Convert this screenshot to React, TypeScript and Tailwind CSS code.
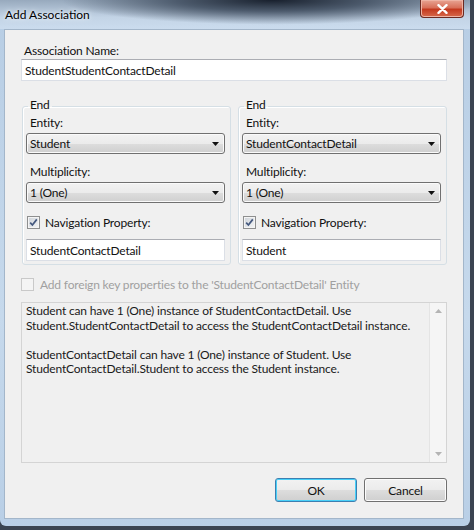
import React from "react";

const font = "font-['Lato','Liberation_Sans',sans-serif]";

function Caret() {
  return (
    <svg width="7" height="4" viewBox="0 0 7 4" className="shrink-0">
      <path d="M0 0H7L3.5 4Z" fill="#111" />
    </svg>
  );
}

function Combo({ value }: { value: string }) {
  return (
    <div className="flex h-[21px] items-center justify-between rounded-[3px] border border-[#707070] bg-[linear-gradient(to_bottom,#f2f2f2_0%,#ebebeb_50%,#dddddd_51%,#cfcfcf_100%)] pl-[3px] pr-[5px] shadow-[inset_0_0_0_1px_#fafafa]">
      <span className="text-[#111]">{value}</span>
      <Caret />
    </div>
  );
}

function TextBox({ value, className = "" }: { value: string; className?: string }) {
  return (
    <div
      className={`flex h-[22px] items-center border border-[#dbdfe6] border-t-[#abadb3] bg-white pl-[3px] text-[#111] ${className}`}
    >
      {value}
    </div>
  );
}

function Check({ checked, disabled }: { checked?: boolean; disabled?: boolean }) {
  return (
    <span
      className={`flex h-[13px] w-[13px] shrink-0 items-center justify-center border ${
        disabled
          ? "border-[#c9c9c9] bg-[#f4f4f4]"
          : "border-[#8e8f8f] bg-[linear-gradient(135deg,#cdd2d8,#f5f6f7)] shadow-[inset_0_0_0_1px_#f4f4f4]"
      }`}
    >
      {checked && (
        <svg width="9" height="9" viewBox="0 0 9 9">
          <path d="M1.2 4.6L3.4 7L7.8 1.4" fill="none" stroke="#44587e" strokeWidth="1.7" />
        </svg>
      )}
    </span>
  );
}

function EndGroup({ entity, nav }: { entity: string; nav: string }) {
  return (
    <fieldset className="rounded-[3px] border border-[#d5dfe5] pb-[3px] pl-[3px] pr-[5px] shadow-[inset_1px_1px_0_#fff]">
      <legend className="ml-[2px] px-[2px] pb-[3px] leading-[15px]">End</legend>
      <div className="pl-[4px]">Entity:</div>
      <div className="mt-[3px]">
        <Combo value={entity} />
      </div>
      <div className="mt-[10px] pl-[4px]">Multiplicity:</div>
      <div className="mt-[3px]">
        <Combo value="1 (One)" />
      </div>
      <div className="mt-[12px] flex items-center gap-[5px] pl-[1px]">
        <Check checked />
        <span>Navigation Property:</span>
      </div>
      <TextBox value={nav} className="mt-[9px]" />
    </fieldset>
  );
}

export default function App() {
  return (
    <div className={`h-[530px] w-[474px] overflow-hidden bg-[#3b4451] text-[12px] leading-[15px] tracking-[-0.17px] text-[#111] ${font}`}>
      <div className="flex h-[526px] w-[470px] flex-col rounded-b-[6px] bg-[linear-gradient(to_bottom,#b7cde4,#c6d9ec_60%,#b9cfe6)]">
        <div className="relative flex h-[29px] shrink-0 items-center bg-[radial-gradient(ellipse_45%_85%_at_58%_0%,#18202d_0%,#4c5a6c_45%,transparent_100%),linear-gradient(to_bottom,#97a9bd,#c3d4e6_60%,#cbdcee)] pl-[5px]">
          <span className="text-[12px] tracking-normal text-black [text-shadow:0_0_6px_#eaf2fb,0_0_3px_#eaf2fb]">Add Association</span>
          <div className="absolute right-[6px] top-0 flex h-[18px] w-[44px] items-center justify-center rounded-b-[4px] border border-t-0 border-[#6b2a22] bg-[linear-gradient(to_bottom,#e8a493_0%,#d8705a_45%,#c4391f_55%,#d76a4c_100%)] shadow-[inset_0_0_0_1px_#eeb3a4]">
            <svg width="11" height="10" viewBox="0 0 11 10">
              <path d="M1.5 1.2L9.5 8.8M9.5 1.2L1.5 8.8" stroke="#fff" strokeWidth="2.4" strokeLinecap="round" />
            </svg>
          </div>
        </div>

        <div className="mb-[7px] ml-[4px] mr-[6px] flex flex-1 flex-col border border-[#a3b6ca] bg-[#f0f0f0] px-[16px] pt-[13px]">
          <div className="pl-[3px]">Association Name:</div>
          <TextBox value="StudentStudentContactDetail" className="mt-[1px]" />

          <div className="mt-[16px] grid grid-cols-2 gap-[7px] pl-[1px]">
            <EndGroup entity="Student" nav="StudentContactDetail" />
            <EndGroup entity="StudentContactDetail" nav="Student" />
          </div>

          <div className="mt-[12px] flex items-center gap-[6px] text-[#a0a0a0]">
            <Check disabled />
            <span>Add foreign key properties to the 'StudentContactDetail' Entity</span>
          </div>

          <div className="mt-[10px] flex h-[161px] border border-[#d4d4d4]">
            <div className="flex-1 pl-[4px] pt-[1px] leading-[14.5px] text-[#1a1a1a]">
              <p>Student can have 1 (One) instance of StudentContactDetail. Use</p>
              <p>Student.StudentContactDetail to access the StudentContactDetail instance.</p>
              <p className="mt-[14.5px]">StudentContactDetail can have 1 (One) instance of Student. Use</p>
              <p>StudentContactDetail.Student to access the Student instance.</p>
            </div>
            <div className="flex w-[17px] flex-col items-center justify-between border-l border-[#e4e4e4] bg-[#f5f5f5] py-[6px]">
              <svg width="7" height="4" viewBox="0 0 7 4">
                <path d="M0 4H7L3.5 0Z" fill="#b4b4b4" />
              </svg>
              <svg width="7" height="4" viewBox="0 0 7 4">
                <path d="M0 0H7L3.5 4Z" fill="#b4b4b4" />
              </svg>
            </div>
          </div>

          <div className="mt-[15px] flex justify-end gap-[7px]">
            <button className="flex h-[24px] w-[82px] items-center justify-center rounded-[3px] border border-[#3c7fb1] bg-[linear-gradient(to_bottom,#f2f2f2_0%,#ebebeb_50%,#dddddd_51%,#cfcfcf_100%)] text-[#111] shadow-[inset_0_0_0_1px_#48d0f8]">
              OK
            </button>
            <button className="flex h-[24px] w-[83px] items-center justify-center rounded-[3px] border border-[#707070] bg-[linear-gradient(to_bottom,#f2f2f2_0%,#ebebeb_50%,#dddddd_51%,#cfcfcf_100%)] text-[#111] shadow-[inset_0_0_0_1px_#fcfcfc]">
              Cancel
            </button>
          </div>
        </div>
      </div>
    </div>
  );
}
